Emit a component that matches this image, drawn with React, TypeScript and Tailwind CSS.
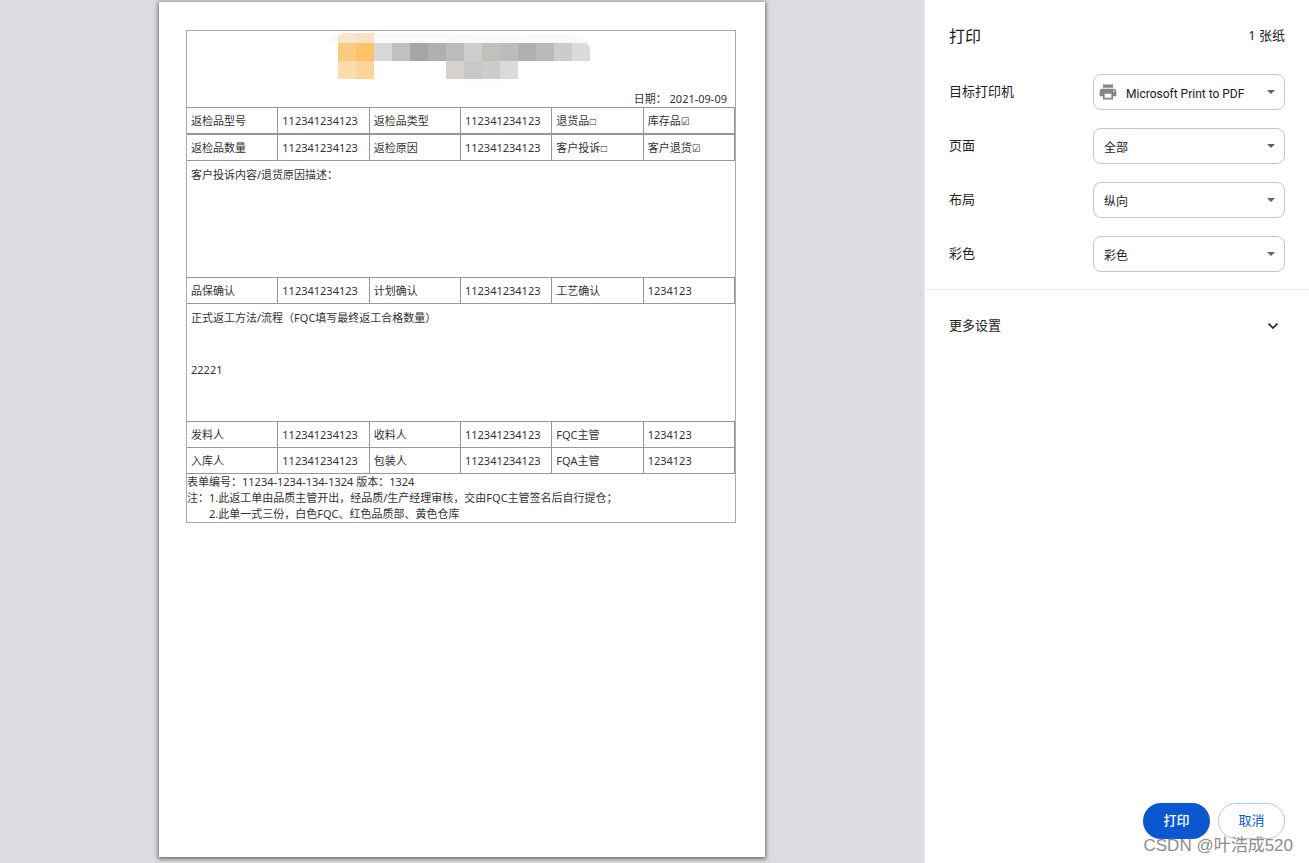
import { useId, useState } from "react";
import type { ReactNode } from "react";

// ---------------------------------------------------------------------------
// Form data
// ---------------------------------------------------------------------------

interface Cell {
  text: string;
  box?: "checked" | "empty";
}

const modelRow: Cell[] = [
  { text: "返检品型号" },
  { text: "112341234123" },
  { text: "返检品类型" },
  { text: "112341234123" },
  { text: "退货品", box: "empty" },
  { text: "库存品", box: "checked" },
];

const amountRow: Cell[] = [
  { text: "返检品数量" },
  { text: "112341234123" },
  { text: "返检原因" },
  { text: "112341234123" },
  { text: "客户投诉", box: "empty" },
  { text: "客户退货", box: "checked" },
];

const confirmRow: Cell[] = [
  { text: "品保确认" },
  { text: "112341234123" },
  { text: "计划确认" },
  { text: "112341234123" },
  { text: "工艺确认" },
  { text: "1234123" },
];

const signRows: Cell[][] = [
  [
    { text: "发料人" },
    { text: "112341234123" },
    { text: "收料人" },
    { text: "112341234123" },
    { text: "FQC主管" },
    { text: "1234123" },
  ],
  [
    { text: "入库人" },
    { text: "112341234123" },
    { text: "包装人" },
    { text: "112341234123" },
    { text: "FQA主管" },
    { text: "1234123" },
  ],
];

// ---------------------------------------------------------------------------
// Paper preview
// ---------------------------------------------------------------------------

function FormTable({ rows }: { rows: Cell[][] }) {
  return (
    <table className="w-full table-fixed border-separate border-spacing-0 border-t border-[#979797]">
      <tbody>
        {rows.map((row, i) => (
          <tr key={i}>
            {row.map((cell, j) => (
              <td key={j} className="h-[26px] border-r border-b border-[#979797] p-0 pl-1 whitespace-nowrap">
                {cell.text}
                {cell.box === "checked" && (
                  <span className="font-['DejaVu_Sans'] text-[10px] leading-none font-bold">☑</span>
                )}
                {cell.box === "empty" && (
                  <span className="align-middle font-['DejaVu_Sans'] text-[8px] leading-none">□</span>
                )}
              </td>
            ))}
          </tr>
        ))}
      </tbody>
    </table>
  );
}

const logoTop = ["#fccb80", "#fec269", "#d8d8d8", "#c0c0bd", "#a5a5a5", "#adafb1", "#bbbbbb", "#cecece", "#c3c0bc", "#babdb9", "#adafb1", "#b9b9b9", "#cccccc"];
const logoBottom = ["#d6d2ce", "#c8c8c8", "#cacdcb", "#dadada"];

// Blurred-out company name: 18px tiles over a faint smear.
function CompanyLogo() {
  return (
    <svg width="268" height="52" viewBox="0 0 268 52" shapeRendering="crispEdges" aria-hidden="true">
      <path d="M0 12C3 7 7 3 16 2H105C130 2 140 5 165 5C190 5 210 4 240 4C252 4 258 6 263 12Z" fill="#f9f9f9" />
      <path d="M119 48H197C180 52 134 52 119 48Z" fill="#fcfcfc" />
      <path d="M11 4L17 2H29V12H11Z" fill="#f9e5cb" />
      <rect x="29" y="2" width="18" height="10" fill="#f9e1c2" />
      {logoTop.map((fill, i) => (
        <rect key={i} x={11 + i * 18} y="12" width="18" height="18" fill={fill} />
      ))}
      <path d="M245 12H259Q262 14 263 17V30H245Z" fill="#dadbdd" />
      <rect x="11" y="30" width="18" height="18" fill="#fddcab" />
      <rect x="29" y="30" width="18" height="18" fill="#fed49a" />
      {logoBottom.map((fill, i) => (
        <rect key={i} x={119 + i * 18} y="30" width="18" height="18" fill={fill} />
      ))}
    </svg>
  );
}

function ReworkForm() {
  return (
    <div className="border border-[#aaaaaa] text-[11px] leading-4 text-[#333]">
      <div className="flex h-[76px] flex-col items-center justify-between">
        <CompanyLogo />
        <div className="self-end pr-2 whitespace-pre">日期： 2021-09-09</div>
      </div>
      <FormTable rows={[modelRow]} />
      <FormTable rows={[amountRow]} />
      <div className="min-h-[116px] px-1 pt-1.5">客户投诉内容/退货原因描述：</div>
      <FormTable rows={[confirmRow]} />
      <div className="min-h-[117px] px-1 pt-1.5">
        <p>正式返工方法/流程（FQC填写最终返工合格数量）</p>
        <p className="mt-9">22221</p>
      </div>
      <FormTable rows={signRows} />
      <p>表单编号：11234-1234-134-1324 版本：1324</p>
      <p>注：1.此返工单由品质主管开出，经品质/生产经理审核，交由FQC主管签名后自行提仓；</p>
      <p className="pl-[22px]">2.此单一式三份，白色FQC、红色品质部、黄色仓库</p>
    </div>
  );
}

// ---------------------------------------------------------------------------
// Settings sidebar
// ---------------------------------------------------------------------------

function PrinterIcon() {
  return (
    <svg className="pointer-events-none absolute top-2 left-[5px] size-5" viewBox="0 0 24 24" fill="#80868b" aria-hidden="true">
      <path d="M19 8H5c-1.66 0-3 1.34-3 3v6h4v4h12v-4h4v-6c0-1.66-1.34-3-3-3zm-3 11H8v-5h8v5zm3-7c-.55 0-1-.45-1-1s.45-1 1-1 1 .45 1 1-.45 1-1 1zm-1-9H6v4h12V3z" />
    </svg>
  );
}

interface SettingProps {
  label: string;
  options: string[];
  icon?: ReactNode;
}

function Setting({ label, options, icon }: SettingProps) {
  const id = useId();
  const [value, setValue] = useState(options[0]);

  return (
    <div className="flex items-center justify-between">
      <label htmlFor={id} className="text-[13px]">
        {label}
      </label>
      <div className="relative w-48">
        <select
          id={id}
          value={value}
          onChange={(e) => setValue(e.target.value)}
          className={`block h-9 w-full appearance-none rounded-lg border border-[#c7c7c7] bg-white pt-1 pr-6 font-[Roboto,'Noto_Sans_CJK_SC',sans-serif] text-xs ${
            icon ? "pl-8" : "pl-2.5"
          }`}
        >
          {options.map((option) => (
            <option key={option}>{option}</option>
          ))}
        </select>
        {icon}
        <svg className="pointer-events-none absolute top-4 right-2.5 h-1 w-2" viewBox="0 0 8 4" fill="#5f6368" aria-hidden="true">
          <path d="M0 0H8L4 4Z" />
        </svg>
      </div>
    </div>
  );
}

export default function App() {
  return (
    <div className="relative flex h-screen overflow-hidden bg-white font-['Noto_Sans','Noto_Sans_CJK_SC',sans-serif] text-[#202124]">
      <main className="flex min-w-0 flex-1 justify-center bg-[#dadce0] pt-0.5 pb-1.5">
        <section className="aspect-[606/855] h-full bg-white pt-7 pr-[29px] pl-[27px] shadow-[0_1px_4px_1px_rgba(0,0,0,0.5)]">
          <ReworkForm />
        </section>
      </main>

      <aside className="flex w-[385px] shrink-0 flex-col border-l border-[#e8eaed] bg-white">
        <header className="mb-0.5 flex h-[72px] items-center justify-between px-6 text-[13px]">
          <h1 className="text-base">打印</h1>
          <span>1 张纸</span>
        </header>
        <div className="flex flex-col gap-[18px] border-b border-[#e8eaed] px-6 pb-[17px]">
          <Setting label="目标打印机" options={["Microsoft Print to PDF"]} icon={<PrinterIcon />} />
          <Setting label="页面" options={["全部", "自定义"]} />
          <Setting label="布局" options={["纵向", "横向"]} />
          <Setting label="彩色" options={["彩色", "黑白"]} />
        </div>
        <button type="button" className="flex h-[72px] items-center justify-between pr-[31px] pl-6 text-[13px]">
          更多设置
          <svg width="10" height="6" viewBox="0 0 10 6" fill="none" stroke="#202124" strokeWidth="1.6" aria-hidden="true">
            <path d="M.6 .6L5 5L9.400 .6" />
          </svg>
        </button>
        <footer className="mt-auto flex justify-end gap-2 px-6 pb-6 text-[13px]">
          <button type="button" className="h-9 w-[67px] rounded-full bg-[#0b57d0] font-medium text-white">
            打印
          </button>
          <button type="button" className="h-9 w-[67px] rounded-full border border-[#a8c7fa] text-[#0b57d0]">
            取消
          </button>
        </footer>
      </aside>

      <div className="pointer-events-none absolute right-4 bottom-[5px] font-['Liberation_Sans','Noto_Sans_CJK_SC',sans-serif] text-[17px] leading-6 whitespace-nowrap text-[#8c8c8c] [text-shadow:0_0_1px_#fff]">
        CSDN @叶浩成520
      </div>
    </div>
  );
}
